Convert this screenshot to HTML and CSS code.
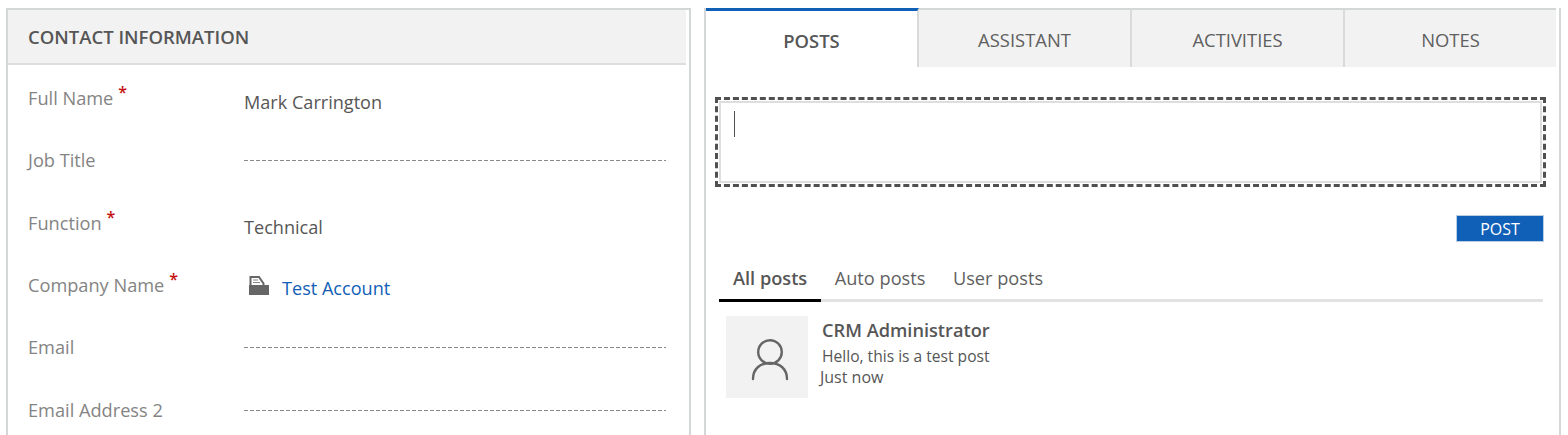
FILE: index.html
```html
<!DOCTYPE html>
<html lang="en">
<head>
  <meta charset="UTF-8" />
  <meta name="viewport" content="width=device-width, initial-scale=1.0"/>
  <title>Contact</title>
  <link rel="stylesheet" href="styles.css">
</head>
<body>
  <div class="page">
    <!-- Contact details -->
    <section class="contact-panel">
      <h2 class="section-title">CONTACT INFORMATION</h2>
      <div class="field-list">
        <div class="field">
          <div class="field-label">Full Name<span class="req">*</span></div>
          <div class="field-value">Mark Carrington</div>
        </div>
        <div class="field">
          <div class="field-label">Job Title</div>
          <div class="field-empty"></div>
        </div>
        <div class="field">
          <div class="field-label">Function<span class="req">*</span></div>
          <div class="field-value">Technical</div>
        </div>
        <div class="field">
          <div class="field-label">Company Name<span class="req">*</span></div>
          <div class="field-value field-link">
            <svg class="account-icon" width="20" height="19" viewBox="0 0 20 19">
              <path d="M1.5 9V1h8.5l4.500 6.500V9" fill="#fff" stroke="#666" stroke-width="2"/>
              <path d="M4 4h5M4 6.500h7" stroke="#888" stroke-width="1.200"/>
              <path d="M0 9h20v10H0z" fill="#666"/>
            </svg>
            <a href="#">Test Account</a>
          </div>
        </div>
        <div class="field">
          <div class="field-label">Email</div>
          <div class="field-empty"></div>
        </div>
        <div class="field">
          <div class="field-label">Email Address 2</div>
          <div class="field-empty"></div>
        </div>
      </div>
    </section>

    <!-- Timeline -->
    <section class="social-panel">
      <div class="tabs">
        <div class="tab active">POSTS</div>
        <div class="tab">ASSISTANT</div>
        <div class="tab">ACTIVITIES</div>
        <div class="tab">NOTES</div>
      </div>

      <div class="composer">
        <div class="composer-box"><span class="caret"></span></div>
      </div>

      <div class="post-actions">
        <button class="post-btn" type="button">POST</button>
      </div>

      <div class="sub-tabs">
        <div class="sub-tab active">All posts</div>
        <div class="sub-tab">Auto posts</div>
        <div class="sub-tab">User posts</div>
      </div>

      <div class="post">
        <div class="avatar">
          <svg width="40" height="48" viewBox="0 0 40 48" fill="none" stroke="#666" stroke-width="2.400" stroke-linecap="round">
            <circle cx="20" cy="19" r="11.800"/>
            <path d="M3 46c0-10 7-16 17-16s17 6 17 16"/>
          </svg>
        </div>
        <div class="post-body">
          <div class="post-author">CRM Administrator</div>
          <div class="post-text">Hello, this is a test post</div>
          <div class="post-time">Just now</div>
        </div>
      </div>
    </section>
  </div>
</body>
</html>
```

FILE: styles.css
```css
* {
  box-sizing: border-box;
}

html, body {
  height: 100%;
}

body {
  margin: 0;
  background: #fff;
  font-family: "Open Sans", "Noto Sans", Arial, sans-serif;
  color: #565656;
  overflow: hidden;
}

.page {
  display: flex;
  height: 435px;
  overflow: hidden;
  padding: 8px 7px 0 6px;
  gap: 13px;
}

.contact-panel {
  width: 685px;
  height: 460px;
  border: 2px solid #d4d7d7;
  padding-right: 3px;
}

.section-title {
  margin: 0;
  height: 55px;
  padding-left: 20px;
  background: #f2f2f2;
  border-bottom: 2px solid #dcdfdf;
  font-size: 18.5px;
  font-weight: 600;
  line-height: 53px;
  color: #565656;
}

.field-list {
  padding-top: 2px;
}

.field {
  display: flex;
  height: 62.3px;
  padding-left: 20px;
  padding-right: 20px;
  align-items: center;
}

.field-label {
  width: 216px;
  flex-shrink: 0;
  font-size: 18.2px;
  color: #848484;
  white-space: nowrap;
}

.req {
  position: relative;
  top: -7px;
  margin-left: 5px;
  font-size: 16px;
  color: #c50f0f;
  font-weight: 600;
}

.field-value {
  font-size: 18.1px;
  color: #565656;
  padding-top: 8px;
}

.field-link {
  display: flex;
  align-items: center;
  gap: 13px;
  padding-left: 5px;
  padding-top: 5px;
}

.field-link a {
  color: #1160b7;
  text-decoration: none;
}

.account-icon {
  margin-bottom: 4px;
}

.field-empty {
  flex: 1;
  height: 1px;
  margin-top: 1px;
  background: repeating-linear-gradient(to right, #8a8a8a 0, #8a8a8a 4px, transparent 4px, transparent 6px);
}

.social-panel {
  flex: 1;
  height: 460px;
  border: 2px solid #d4d7d7;
  border-top: 0;
  padding-right: 3px;
}

.tabs {
  display: flex;
  height: 59px;
}

.tab {
  flex: 1;
  text-align: center;
  font-size: 18.4px;
  line-height: 60px;
  background: #f2f2f2;
  border-top: 2px solid #d4d7d7;
  border-right: 2px solid #d9dbdb;
  color: #5f5f5f;
}

.tab:last-child {
  border-right: 0;
}

.tab.active {
  background: #fff;
  border-top: 3px solid #1160b7;
  font-weight: 600;
  color: #565656;
}

.composer {
  margin: 30px 10px 0 9px;
  padding: 1px;
  height: 90px;
  border: 3px dashed #505050;
}

.composer-box {
  height: 100%;
  border: 2px solid #dedede;
  padding: 8px 13px;
}

.caret {
  display: block;
  width: 1px;
  height: 26px;
  background: #505050;
}

.post-actions {
  display: flex;
  justify-content: flex-end;
  margin: 28px 12px 0 0;
}

.post-btn {
  width: 88px;
  height: 27px;
  padding: 0;
  background: #1160b7;
  border: 1px solid #b9cde4;
  color: #fff;
  font-family: inherit;
  font-size: 16px;
}

.sub-tabs {
  display: flex;
  margin: 21px 13px 0 13px;
  height: 39px;
  border-bottom: 3px solid #e2e2e2;
}

.sub-tab {
  padding: 0 13.5px 0 14px;
  font-size: 18.2px;
  line-height: 30px;
  height: 39px;
  color: #5f5f5f;
}

.sub-tab.active {
  font-weight: 600;
  border-bottom: 3px solid #000;
  color: #565656;
}

.post {
  display: flex;
  margin: 14px 0 0 20px;
}

.avatar {
  width: 82px;
  height: 82px;
  background: #f2f2f2;
  display: flex;
  align-items: center;
  justify-content: center;
}

.avatar svg {
  margin-left: 6px;
}

.post-body {
  padding: 2px 0 0 14px;
}

.post-author {
  font-size: 18.2px;
  font-weight: 600;
  line-height: 24px;
}

.post-text {
  font-size: 15.6px;
  line-height: 22px;
  margin-top: 3px;
}

.post-time {
  font-size: 16px;
  line-height: 21px;
  margin-left: -2px;
}
```
